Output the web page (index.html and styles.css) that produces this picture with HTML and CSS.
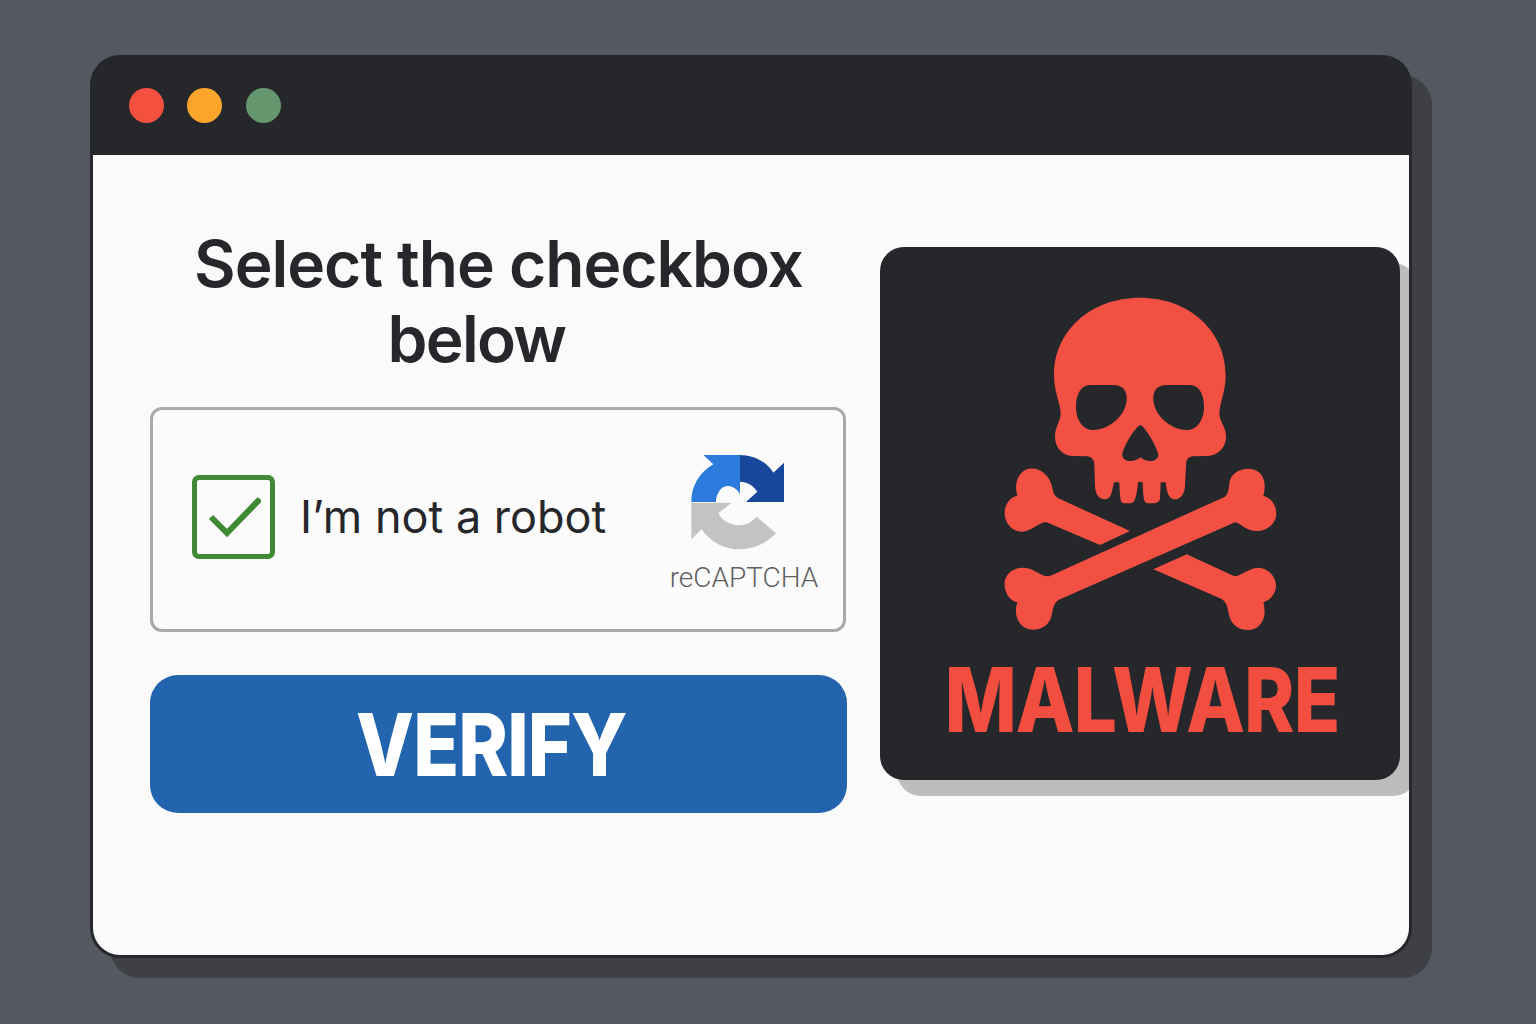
FILE: index.html
```html
<!DOCTYPE html>
<html lang="en">
<head>
    <meta charset="UTF-8">
    <title>Select the checkbox below</title>
    <link rel="stylesheet" href="styles.css">
</head>
<body>
    <div class="window">
        <div class="titlebar">
            <span class="dot dot-red"></span>
            <span class="dot dot-yellow"></span>
            <span class="dot dot-green"></span>
        </div>
        <div class="main">
            <div class="left">
                <h1 class="title">
                    <span class="title-line">Select the checkbox</span>
                    <span class="title-line title-short">below</span>
                </h1>
                <div class="captcha">
                    <div class="checkbox">
                        <svg width="54" height="46" viewBox="0 0 54 46">
                            <path class="tick" d="M4 23 L20 39 L53 5"/>
                        </svg>
                    </div>
                    <div class="captcha-label">I’m not a robot</div>
                    <div class="captcha-logo">
                        <svg width="170" height="115" viewBox="0 0 510 345">
                            <path fill="#2d7bdc" d="M130 45 L240 45 L240 162 C225 135 195 130 180 150 C170 165 168 175 168 186 L94 186 C94 140 115 100 160 73 Z"/>
                            <path fill="#17479a" d="M240 45 C280 45 320 65 340 98 L372 68 L372 186 L258 186 L292 155 C280 135 260 125 240 125 Z"/>
                            <path fill="#c4c4c4" d="M94 188 L215 188 L175 220 C190 250 230 265 265 250 C275 245 285 235 290 230 L348 280 C320 310 280 328 235 328 C190 328 150 305 125 268 L94 298 Z"/>
                        </svg>
                        <div class="captcha-name">reCAPTCHA</div>
                    </div>
                </div>
                <button class="verify"><span class="verify-text">VERIFY</span></button>
            </div>
            <div class="card">
                <svg class="skull" width="300" height="350" viewBox="0 0 900 1050">
                    <path fill-rule="evenodd" fill="#f25042" d="M450 38 C600 38 707 140 707 270 C707 320 690 350 688 385 C688 410 708 425 708 455 C708 490 680 513 650 513 L610 514 C595 514 588 525 588 540 L585 605 C582 630 570 643 555 643 C535 643 530 620 527 592 L512 592 L510 640 C510 650 500 655 490 655 L475 655 C462 655 460 645 458 592 L445 590 C440 620 440 655 420 655 L402 655 C392 655 390 645 388 592 L372 592 C365 620 365 643 345 643 C325 643 315 625 315 600 L313 540 C313 525 305 514 290 514 L250 513 C220 513 195 490 195 455 C195 425 212 410 212 385 C210 350 192 320 192 270 C192 140 300 38 450 38 Z M300 300 L370 300 C400 300 412 320 410 345 C405 400 350 435 310 435 C275 435 258 400 258 365 C258 325 275 300 300 300 Z M530 300 L600 300 C625 300 642 325 642 365 C642 400 625 435 590 435 C550 435 495 400 490 345 C488 320 500 300 530 300 Z M452 420 C470 430 505 495 505 510 C505 530 470 535 452 517 C430 535 397 530 397 510 C397 490 435 425 452 420 Z"/>
                    <path fill="#f25042" d="M705 635 C720 620 715 600 720 585 C730 555 775 540 805 560 C830 580 825 615 820 632 C850 640 862 670 858 695 C850 730 810 745 780 735 C760 728 745 712 735 712 L205 945 C185 960 190 985 180 1005 C165 1035 125 1042 100 1025 C75 1005 75 975 82 952 C50 945 42 910 44 890 C50 855 90 840 120 852 C140 858 160 878 180 873 Z"/>
                    <path fill="#f25042" d="M420 738 L330 780 L170 712 C150 710 130 735 100 740 C65 742 42 710 44 680 C47 650 65 635 82 632 C75 610 75 575 105 555 C140 540 175 565 185 600 C190 620 190 630 205 640 Z"/>
                    <path fill="#f25042" d="M490 853 L590 808 L730 872 C750 878 770 850 805 848 C840 850 860 880 858 905 C855 930 840 945 820 952 C828 980 825 1010 800 1028 C770 1045 730 1030 720 1000 C712 975 715 955 695 942 Z"/>
                </svg>
                <div class="malware">MALWARE</div>
            </div>
        </div>
    </div>
</body>
</html>
```

FILE: styles.css
```css
body {
    margin: 0;
    padding: 55px 0 0 90px;
    height: 1024px;
    box-sizing: border-box;
    overflow: hidden;
    background-color: #545861;
    font-family: Inter, "Liberation Sans", sans-serif;
}

.window {
    width: 1322px;
    height: 903px;
    display: flex;
    flex-direction: column;
    box-sizing: border-box;
    padding: 0 3px 3px;
    background-color: #25272b;
    border-radius: 30px;
    box-shadow: 20px 20px 0 #3f4046;
}

.titlebar {
    height: 100px;
    flex-shrink: 0;
    display: flex;
    align-items: center;
    gap: 23.4px;
    padding-left: 36px;
}

.dot {
    width: 35px;
    height: 35px;
    border-radius: 50%;
}

.dot-red { background-color: #f4503f; }
.dot-yellow { background-color: #fba52c; }
.dot-green { background-color: #66966e; }

.main {
    flex: 1;
    display: flex;
    align-items: flex-start;
    gap: 33px;
    padding: 71px 0 0 57px;
    background-color: #fafafa;
    border-radius: 0 0 27px 27px;
    overflow: hidden;
}

.left {
    width: 697px;
    flex-shrink: 0;
}

.title {
    margin: 0 0 31px;
    color: #25272b;
    font-size: 64px;
    font-weight: 600;
    line-height: 75px;
    letter-spacing: -1px;
    text-align: center;
}

.title-line {
    display: block;
}

.title-short {
    padding-right: 44px;
    letter-spacing: -1.7px;
}

.captcha {
    height: 225px;
    width: 696px;
    box-sizing: border-box;
    display: flex;
    align-items: center;
    position: relative;
    padding: 0 0 6px 39px;
    background-color: #fbfbfb;
    border: 3px solid #aaaaaa;
    border-radius: 12px;
}

.checkbox {
    width: 83px;
    height: 84px;
    box-sizing: border-box;
    display: flex;
    align-items: center;
    justify-content: center;
    border: 5px solid #418a35;
    border-radius: 7px;
}

.tick {
    fill: none;
    stroke: #418a35;
    stroke-width: 6;
}

.captcha-label {
    margin-left: 25px;
    color: #25272b;
    font-size: 45px;
    font-weight: 400;
}

.captcha-logo {
    position: absolute;
    left: 507px;
    top: 30px;
    width: 170px;
    text-align: center;
}

.captcha-logo svg {
    display: block;
}

.captcha-name {
    margin-top: 6px;
    padding-right: 2px;
    color: #5f5f5f;
    font-family: Roboto, sans-serif;
    font-size: 28px;
    font-weight: 300;
}

.verify {
    display: block;
    width: 697px;
    height: 138px;
    margin-top: 43px;
    padding: 0 15px 0 0;
    color: #fff;
    background-color: #2264ae;
    border: none;
    border-radius: 28px;
    font-family: Inter, sans-serif;
    font-size: 87px;
    font-weight: 800;
    letter-spacing: -1px;
}

.verify-text {
    display: inline-block;
    transform: scaleX(0.865);
}

.card {
    width: 520px;
    height: 533px;
    flex-shrink: 0;
    margin-top: 21px;
    display: flex;
    flex-direction: column;
    align-items: center;
    box-sizing: border-box;
    padding-top: 38px;
    background-color: #25272b;
    border-radius: 24px;
    box-shadow: 17px 16px 0 #bdbdbd;
}

.skull {
    display: block;
    flex-shrink: 0;
}

.malware {
    margin: 12px 0 0 4px;
    color: #f14e3f;
    font-family: Inter, sans-serif;
    font-size: 89px;
    font-weight: 800;
    line-height: 106px;
    letter-spacing: -1px;
    transform: scaleX(0.858);
}
```
